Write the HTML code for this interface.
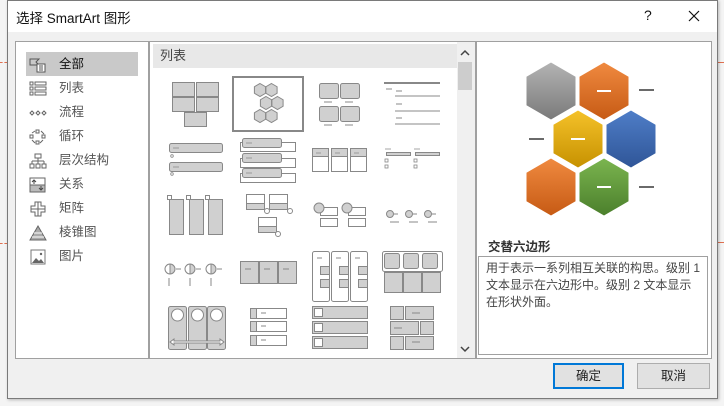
<!DOCTYPE html>
<html><head><meta charset="utf-8">
<style>
*{margin:0;padding:0;box-sizing:border-box}
body{width:724px;height:406px;background:#f4f4f4;position:relative;overflow:hidden;font-family:"Liberation Sans","Noto Sans CJK SC",sans-serif;font-size:12px;color:#222}
.a{position:absolute}
#dlg{left:7px;top:0;width:711px;height:399px;background:#f0f0f0;border:1px solid #7a7a7a;box-shadow:1px 1px 3px rgba(0,0,0,.25)}
#title{left:0;top:0;width:709px;height:31px;background:#fff}
.item{position:absolute;left:10px;width:112px;height:23px;line-height:23px;padding-left:33px;font-size:12.5px;color:#555}
.ic{position:absolute;left:3px;top:4px;width:18px;height:16px}
.btn{position:absolute;top:362px;height:26px;line-height:24px;text-align:center;font-size:12.5px;background:#e1e1e1;border:1px solid #adadad}
</style></head><body>
<div class="a" style="left:0;top:62px;width:7px;border-top:1px dashed #e07050"></div>
<div class="a" style="left:718px;top:62px;width:6px;border-top:1px dashed #e07050"></div>
<div class="a" style="left:0;top:243px;width:7px;border-top:1px dashed #e07050"></div>
<div class="a" style="left:718px;top:242px;width:6px;border-top:1px dashed #e07050"></div>
<div id="dlg" class="a">
 <div id="title" class="a"></div>
 <div class="a" style="left:8px;top:6px;font-size:13.5px;color:#111">选择 SmartArt 图形</div>
 <div class="a" style="left:636px;top:6px;font-size:14px;color:#111">?</div>
 <svg class="a" style="left:680px;top:9px" width="12" height="12"><path d="M1 1L11 11M11 1L1 11" stroke="#111" stroke-width="1.2"/></svg>

 <div class="a" style="left:7px;top:40px;width:134px;height:318px;background:#fff;border:1px solid #a0a0a0">
  <div class="a" style="left:10px;top:10px;width:112px;height:24px;background:#c9c9c9"></div>
  <div class="item" style="top:11px;color:#111">全部<svg class="ic" viewBox="0 0 18 16"><path d="M1 2h9l-3 3 3 3H1z" fill="none" stroke="#555"/><rect x="8" y="7" width="8" height="8" fill="#fff" stroke="#555"/><path d="M10 9h4M10 11h4M10 13h4" stroke="#555"/></svg></div>
  <div class="item" style="top:35px">列表<svg class="ic" viewBox="0 0 18 16"><g fill="none" stroke="#666"><rect x="1" y="1" width="3" height="3"/><rect x="6" y="1" width="11" height="3"/><rect x="1" y="6" width="3" height="3"/><rect x="6" y="6" width="11" height="3"/><rect x="1" y="11" width="3" height="3"/><rect x="6" y="11" width="11" height="3"/></g></svg></div>
  <div class="item" style="top:59px">流程<svg class="ic" viewBox="0 0 18 16"><path d="M1 8l2-2 2 2-2 2zM7 8l2-2 2 2-2 2zM13 8l2-2 2 2-2 2z" fill="none" stroke="#666"/></svg></div>
  <div class="item" style="top:83px">循环<svg class="ic" viewBox="0 0 18 16"><g fill="none" stroke="#666"><rect x="7" y="1" width="3" height="3"/><rect x="1" y="6" width="3" height="3"/><rect x="13" y="6" width="3" height="3"/><rect x="7" y="12" width="3" height="3"/><path d="M3 4l3-2M12 2l3 3M14 11l-3 3M3 11l3 3"/></g></svg></div>
  <div class="item" style="top:107px">层次结构<svg class="ic" viewBox="0 0 18 16"><g fill="none" stroke="#666"><rect x="6" y="1" width="6" height="4"/><path d="M9 5v3M3 8h12M3 8v3M9 8v3M15 8v3"/><rect x="1" y="11" width="4" height="4"/><rect x="7" y="11" width="4" height="4"/><rect x="13" y="11" width="4" height="4"/></g></svg></div>
  <div class="item" style="top:131px">关系<svg class="ic" viewBox="0 0 18 16"><rect x="1" y="1" width="15" height="14" fill="#fff" stroke="#666"/><rect x="1" y="8" width="15" height="7" fill="#bbb" stroke="#666"/><path d="M5 7V3M3 5l2-2 2 2M12 9v4M10 11l2 2 2-2" fill="none" stroke="#444"/></svg></div>
  <div class="item" style="top:155px">矩阵<svg class="ic" viewBox="0 0 18 16"><path d="M6 1h6v4h4v6h-4v4H6v-4H2V5h4z" fill="none" stroke="#666"/><path d="M9 1v14M2 8h14" stroke="#666"/></svg></div>
  <div class="item" style="top:179px">棱锥图<svg class="ic" viewBox="0 0 18 16"><path d="M9 1L17 15H1z" fill="#aaa" stroke="#666"/><path d="M5 8h8M3 12h12" stroke="#fff"/></svg></div>
  <div class="item" style="top:203px">图片<svg class="ic" viewBox="0 0 18 16"><rect x="2" y="1" width="14" height="14" fill="#fff" stroke="#777"/><path d="M3 14l4-5 3 3 2-2 3 4z" fill="#666"/><circle cx="12" cy="5" r="1.2" fill="#666"/></svg></div>
 </div>

 <div class="a" style="left:141px;top:40px;width:327px;height:318px;background:#fff;border:1px solid #a0a0a0">
  <div class="a" style="left:3px;top:2px;width:304px;height:24px;background:#e8e8e8;font-size:13px;line-height:24px;padding-left:7px;color:#444">列表</div>
  <div class="a" style="left:307px;top:0;width:18px;height:316px;background:#f0f0f0"></div>
  <div class="a" style="left:308px;top:20px;width:14px;height:28px;background:#cdcdcd"></div>
  <svg class="a" style="left:310px;top:7px" width="10" height="8"><path d="M1 6l4-4 4 4" fill="none" stroke="#444" stroke-width="1.5"/></svg>
  <svg class="a" style="left:310px;top:303px" width="10" height="8"><path d="M1 2l4 4 4-4" fill="none" stroke="#444" stroke-width="1.5"/></svg>
 </div>
 <svg class="a" style="left:-7px;top:0" width="480" height="360">
  <g fill="#d0d0d0" stroke="#888" stroke-width="1">
   <rect x="171.5" y="81.5" width="22" height="14"/><rect x="195.5" y="81.5" width="22" height="14"/><rect x="171.5" y="96.5" width="22" height="14"/><rect x="195.5" y="96.5" width="22" height="14"/><rect x="183.5" y="111.5" width="22" height="14"/>
  </g>
  <rect x="232" y="76" width="70" height="54" fill="#fff" stroke="#888" stroke-width="2"/>
  <g fill="#d0d0d0" stroke="#888">
   <path d="M0 -6.5L5.6 -3.25V3.25L0 6.5L-5.6 3.25V-3.25Z" transform="translate(259 89)"/>
   <path d="M0 -6.5L5.6 -3.25V3.25L0 6.5L-5.6 3.25V-3.25Z" transform="translate(270.5 89)"/>
   <path d="M0 -6.5L5.6 -3.25V3.25L0 6.5L-5.6 3.25V-3.25Z" transform="translate(265 102)"/>
   <path d="M0 -6.5L5.6 -3.25V3.25L0 6.5L-5.6 3.25V-3.25Z" transform="translate(276.5 102)"/>
   <path d="M0 -6.5L5.6 -3.25V3.25L0 6.5L-5.6 3.25V-3.25Z" transform="translate(259 115)"/>
   <path d="M0 -6.5L5.6 -3.25V3.25L0 6.5L-5.6 3.25V-3.25Z" transform="translate(270.5 115)"/>
   <rect x="318.5" y="82.5" width="19" height="15" rx="2"/><rect x="339.5" y="82.5" width="19" height="15" rx="2"/><rect x="318.5" y="105.5" width="19" height="15" rx="2"/><rect x="339.5" y="105.5" width="19" height="15" rx="2"/>
  </g>
  <g stroke="#888">
   <path d="M323 101h8M344 101h8M323 124h8M344 124h8"/>
   <path d="M383 82h56" stroke-width="2"/><path d="M385 88h6M395 90h6M394 95h45M395 103h6M394 110h45M395 117h6M394 123h45"/>
  </g>
  <g fill="#d0d0d0" stroke="#888">
   <rect x="168.5" y="142.5" width="53" height="9" rx="2"/><rect x="168.5" y="161.5" width="53" height="9" rx="2"/>
   <rect x="239.5" y="141.5" width="55" height="9" fill="#fff"/><rect x="241.5" y="137.5" width="39" height="9" rx="2"/>
   <rect x="239.5" y="157.5" width="55" height="9" fill="#fff"/><rect x="241.5" y="152.5" width="39" height="9" rx="2"/>
   <rect x="239.5" y="172.5" width="55" height="9" fill="#fff"/><rect x="241.5" y="167.5" width="39" height="9" rx="2"/>
   <rect x="311.5" y="147.5" width="16" height="23" fill="#fff"/><rect x="311.5" y="147.5" width="16" height="8"/>
   <rect x="330.5" y="147.5" width="16" height="23" fill="#fff"/><rect x="330.5" y="147.5" width="16" height="8"/>
   <rect x="349.5" y="147.5" width="16" height="23" fill="#fff"/><rect x="349.5" y="147.5" width="16" height="8"/>
   <rect x="385.5" y="151.5" width="24" height="3"/><rect x="414.5" y="151.5" width="24" height="3"/>
  </g>
  <g stroke="#888" fill="#fff" stroke-width=".8">
   <path d="M172 147h6M172 166h6M245 142h6M245 157h6M245 172h6M315 152h5M334 152h5M353 152h5M384 148h6M413 148h6"/>
   <circle cx="171" cy="155" r="1.3"/><circle cx="171" cy="173" r="1.3"/>
   <rect x="384" y="158" width="3" height="3"/><rect x="384" y="164" width="3" height="3"/><rect x="413" y="158" width="3" height="3"/><rect x="413" y="164" width="3" height="3"/>
  </g>
  <g fill="#d0d0d0" stroke="#888">
   <rect x="168.5" y="198.5" width="14" height="35"/><rect x="188.5" y="198.5" width="14" height="35"/><rect x="207.5" y="198.5" width="14" height="35"/>
   <rect x="245.5" y="193.5" width="18" height="15" fill="#fff"/><rect x="245.5" y="202.5" width="18" height="6"/>
   <rect x="268.5" y="193.5" width="18" height="15" fill="#fff"/><rect x="268.5" y="202.5" width="18" height="6"/>
   <rect x="257.5" y="216.5" width="18" height="15" fill="#fff"/><rect x="257.5" y="225.5" width="18" height="6"/>
   <rect x="319.5" y="206.5" width="17" height="8" fill="#fff"/><rect x="347.5" y="206.5" width="17" height="8" fill="#fff"/>
   <rect x="319.5" y="217.5" width="17" height="8" fill="#fff"/><rect x="347.5" y="217.5" width="17" height="8" fill="#fff"/>
   <circle cx="318" cy="207" r="5"/><circle cx="346" cy="207" r="5"/>
   <circle cx="389" cy="213" r="3.5"/><circle cx="408" cy="213" r="3.5"/><circle cx="427" cy="213" r="3.5"/>
  </g>
  <g fill="#fff" stroke="#888">
   <rect x="166.5" y="194.5" width="4" height="4"/><rect x="185.5" y="194.5" width="4" height="4"/><rect x="204.5" y="194.5" width="4" height="4"/>
   <circle cx="266" cy="210" r="2.5"/><circle cx="289" cy="210" r="2.5"/><circle cx="277" cy="233" r="2.5"/>
   <path d="M393 213h4M412 213h4M431 213h4M389 221h9M408 221h9M427 221h9"/>
  </g>
  <g fill="#d0d0d0" stroke="#888">
   <path d="M169 263a5 5 0 0 1 0 10z"/><path d="M189 263a5 5 0 0 1 0 10z"/><path d="M210 263a5 5 0 0 1 0 10z"/>
   <rect x="239.5" y="260.5" width="18" height="22"/><rect x="258.5" y="260.5" width="18" height="22"/><rect x="277.5" y="260.5" width="18" height="22"/>
   <rect x="319.5" y="265.5" width="9" height="8"/><rect x="319.5" y="278.5" width="9" height="8"/>
   <rect x="338.5" y="265.5" width="9" height="8"/><rect x="338.5" y="278.5" width="9" height="8"/>
   <rect x="357.5" y="265.5" width="9" height="8"/><rect x="357.5" y="278.5" width="9" height="8"/>
   <rect x="383.5" y="252.5" width="15" height="15" rx="2"/><rect x="402.5" y="252.5" width="15" height="15" rx="2"/><rect x="421.5" y="252.5" width="15" height="15" rx="2"/>
   <rect x="383.5" y="271.5" width="18" height="20"/><rect x="402.5" y="271.5" width="18" height="20"/><rect x="421.5" y="271.5" width="18" height="20"/>
  </g>
  <g fill="none" stroke="#888">
   <path d="M169 263a5 5 0 0 0 0 10M189 263a5 5 0 0 0 0 10M210 263a5 5 0 0 0 0 10M175 268h5M195 268h5M216 268h5M168 277v8M189 277v8M210 277v8"/>
   <rect x="311.5" y="250.5" width="17" height="50" rx="2"/><rect x="330.5" y="250.5" width="17" height="50" rx="2"/><rect x="349.5" y="250.5" width="17" height="50" rx="2"/>
   <rect x="381.5" y="250.5" width="60" height="20" rx="2"/>
   <path d="M244 268h6M263 268h6M282 268h6M316 257h5M335 257h5M354 257h5"/>
  </g>
  <g fill="#d0d0d0" stroke="#888">
   <rect x="167.5" y="305.5" width="18" height="43" rx="2"/><rect x="187.5" y="305.5" width="18" height="43" rx="2"/><rect x="206.5" y="305.5" width="18" height="43" rx="2"/>
   <rect x="249.5" y="307.5" width="6" height="10"/><rect x="249.5" y="320.5" width="6" height="10"/><rect x="249.5" y="334.5" width="6" height="10"/>
   <rect x="311.5" y="305.5" width="55" height="12"/><rect x="311.5" y="320.5" width="55" height="12"/><rect x="311.5" y="335.5" width="55" height="12"/>
   <rect x="389.5" y="305.5" width="13" height="13"/><rect x="404.5" y="305.5" width="28" height="13"/><rect x="389.5" y="320.5" width="28" height="13"/><rect x="419.5" y="320.5" width="13" height="13"/><rect x="389.5" y="335.5" width="13" height="13"/><rect x="404.5" y="335.5" width="28" height="13"/>
  </g>
  <g fill="#fff" stroke="#888">
   <circle cx="176.5" cy="314" r="6"/><circle cx="196.5" cy="314" r="6"/><circle cx="215.5" cy="314" r="6"/>
   <path d="M169 341l4-3v2h46v-2l4 3-4 3v-2h-46v2z"/>
   <rect x="255.5" y="307.5" width="30" height="10"/><rect x="255.5" y="320.5" width="30" height="10"/><rect x="255.5" y="334.5" width="30" height="10"/>
   <rect x="313.5" y="307.5" width="8" height="8"/><rect x="313.5" y="322.5" width="8" height="8"/><rect x="313.5" y="337.5" width="8" height="8"/>
   <path d="M260 312h5M260 325h5M260 339h5M411 312h8M393 327h8M411 341h8"/>
  </g>
 </svg>

 <div class="a" style="left:468px;top:40px;width:236px;height:318px;background:#fff;border:1px solid #a0a0a0"></div>
 <svg class="a" style="left:-7px;top:0" width="724" height="260">
  <defs>
   <linearGradient id="gg" x1="0" y1="0" x2="0" y2="1"><stop offset="0" stop-color="#b4b4b4"/><stop offset="1" stop-color="#7a7a7a"/></linearGradient>
   <linearGradient id="go" x1="0" y1="0" x2="0" y2="1"><stop offset="0" stop-color="#f08a40"/><stop offset="1" stop-color="#c65a14"/></linearGradient>
   <linearGradient id="gy" x1="0" y1="0" x2="0" y2="1"><stop offset="0" stop-color="#f5c22a"/><stop offset="1" stop-color="#c69100"/></linearGradient>
   <linearGradient id="gb" x1="0" y1="0" x2="0" y2="1"><stop offset="0" stop-color="#4f7ec8"/><stop offset="1" stop-color="#2f5597"/></linearGradient>
   <linearGradient id="gr" x1="0" y1="0" x2="0" y2="1"><stop offset="0" stop-color="#7bb54f"/><stop offset="1" stop-color="#4b7f2c"/></linearGradient>
  </defs>
  <g stroke="#fff" stroke-width="1">
   <path d="M0 -29L25 -14.5V14.5L0 29L-25 14.5V-14.5Z" fill="url(#gg)" transform="translate(550 90)"/>
   <path d="M0 -29L25 -14.5V14.5L0 29L-25 14.5V-14.5Z" fill="url(#go)" transform="translate(603 90)"/>
   <path d="M0 -29L25 -14.5V14.5L0 29L-25 14.5V-14.5Z" fill="url(#gy)" transform="translate(577 138)"/>
   <path d="M0 -29L25 -14.5V14.5L0 29L-25 14.5V-14.5Z" fill="url(#gb)" transform="translate(630 138)"/>
   <path d="M0 -29L25 -14.5V14.5L0 29L-25 14.5V-14.5Z" fill="url(#go)" transform="translate(550 186)"/>
   <path d="M0 -29L25 -14.5V14.5L0 29L-25 14.5V-14.5Z" fill="url(#gr)" transform="translate(603 186)"/>
  </g>
  <path d="M596 90h14M570 138h14M596 186h14" stroke="#fff" stroke-width="2"/>
  <path d="M638 89h15M528 138h15M638 186h15" stroke="#111" stroke-width="1.3"/>
 </svg>
 <div class="a" style="left:480px;top:235px;font-size:12.5px;font-weight:bold;color:#333">交替六边形</div>
 <div class="a" style="left:470px;top:255px;width:230px;height:99px;background:#fff;border:1px solid #a0a0a0;padding:3px 7px;font-size:12px;line-height:17px;color:#444">用于表示一系列相互关联的构思。级别 1 文本显示在六边形中。级别 2 文本显示在形状外面。</div>

 <div class="btn" style="left:545px;width:71px;border:2px solid #0078d7;line-height:22px">确定</div>
 <div class="btn" style="left:629px;width:73px">取消</div>
</div>
</body></html>
